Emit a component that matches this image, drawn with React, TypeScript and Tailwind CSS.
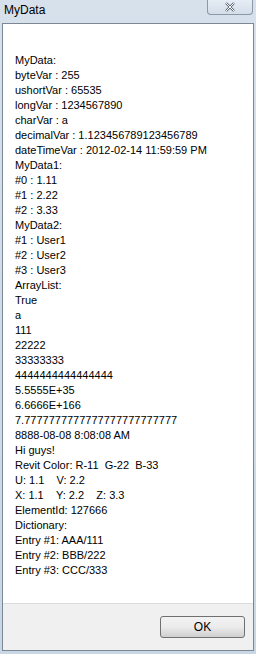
import React from "react";

const lines: string[] = [
  "MyData:",
  "byteVar : 255",
  "ushortVar : 65535",
  "longVar : 1234567890",
  "charVar : a",
  "decimalVar : 1.123456789123456789",
  "dateTimeVar : 2012-02-14 11:59:59 PM",
  "MyData1:",
  "#0 : 1.11",
  "#1 : 2.22",
  "#2 : 3.33",
  "MyData2:",
  "#1 : User1",
  "#2 : User2",
  "#3 : User3",
  "ArrayList:",
  "True",
  "a",
  "111",
  "22222",
  "33333333",
  "4444444444444444",
  "5.5555E+35",
  "6.6666E+166",
  "7.7777777777777777777777777",
  "8888-08-08 8:08:08 AM",
  "Hi guys!",
  "Revit Color: R-11\u00a0\u00a0G-22\u00a0\u00a0B-33",
  "U: 1.1\u00a0\u00a0\u00a0\u00a0V: 2.2",
  "X: 1.1\u00a0\u00a0\u00a0\u00a0Y: 2.2\u00a0\u00a0\u00a0\u00a0Z: 3.3",
  "ElementId: 127666",
  "Dictionary:",
  "Entry #1: AAA/111",
  "Entry #2: BBB/222",
  "Entry #3: CCC/333",
];

const App = () => {
  return (
    <div className="w-[256px] h-[654px] flex flex-col bg-gradient-to-b from-[#d6e1ec] to-[#c9d6e4] overflow-hidden font-['Liberation_Sans',Arial,sans-serif]">
      {/* title bar */}
      <div className="h-[23px] flex items-start justify-between pl-[4px] pr-[3px]">
        <span className="text-[12px] leading-[20px] text-black">MyData</span>
        <div className="w-[46px] h-[15px] rounded-b-[4px] border border-t-0 border-[#8a98a8] bg-gradient-to-b from-[#e6edf4] to-[#d4dee9] flex items-center justify-center">
          <svg width="12" height="10" viewBox="0 0 12 10">
            <path d="M2 1 L10 9 M10 1 L2 9" stroke="#5a6674" strokeWidth="2.4" fill="none" />
            <path d="M2 1 L10 9 M10 1 L2 9" stroke="#ffffff" strokeWidth="1" fill="none" />
          </svg>
        </div>
      </div>

      {/* client area */}
      <div className="flex-1 mx-[2px] mb-[3px] flex flex-col border border-[#7c8796] bg-[#f0f0f0]">
        <div className="h-[580px] bg-white border-b border-[#dcdcdc] pt-[29px] pl-3 flex flex-col">
          {lines.map((line, i) => (
            <span key={i} className="text-[11px] leading-[15px] text-black whitespace-nowrap">
              {line}
            </span>
          ))}
        </div>
        <div className="flex-1 flex items-center justify-end pr-[8px]">
          <button className="w-[85px] h-[22px] rounded-[3px] border border-[#707070] bg-gradient-to-b from-[#f2f2f2] via-[#ebebeb] to-[#cfcfcf] text-[12px] text-black">
            OK
          </button>
        </div>
      </div>
    </div>
  );
};

export default App;
